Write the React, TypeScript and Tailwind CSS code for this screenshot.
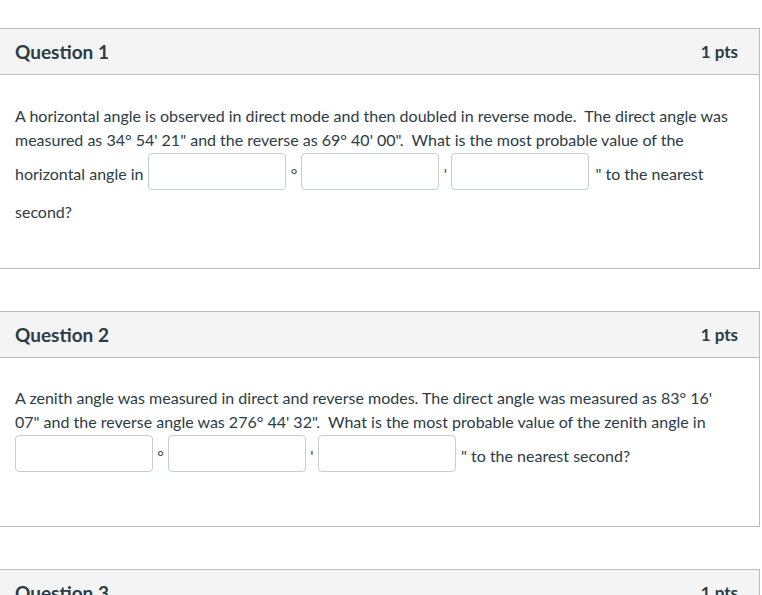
import React from "react";

function Header({ title }: { title: string }) {
  return (
    <div className="flex h-[46px] items-center justify-between border-b border-[#b9bcbf] bg-[#f4f4f4] pl-[15px] pr-[21px]">
      <span className="text-[19px] font-bold leading-none">{title}</span>
      <span className="text-[17px] font-bold leading-none">1 pts</span>
    </div>
  );
}

function Box() {
  return (
    <div className="mt-[1px] h-[37px] w-[138px] shrink-0 rounded-[4px] border border-[#c7cdd1] bg-white" />
  );
}

function Deg() {
  return <span className="mt-[10px] w-[15px] shrink-0 text-center leading-6 text-[#44484c]">°</span>;
}

function Min() {
  return <span className="mt-[10px] w-[12px] shrink-0 text-center leading-6 text-[#44484c]">'</span>;
}

export default function App() {
  return (
    <div className="min-h-screen bg-white pt-[28px] font-['Lato','Liberation_Sans',sans-serif] text-[16px] text-[#2d3b45]">
      {/* Question 1 */}
      <div className="w-[760px] border-y border-r border-[#b9bcbf]">
        <Header title="Question 1" />
        <div className="px-[15px] pb-[44px] pt-[29px]">
          <div className="whitespace-nowrap leading-6">
            A horizontal angle is observed in direct mode and then doubled in reverse mode.&nbsp; The direct angle was
          </div>
          <div className="whitespace-nowrap leading-6">
            measured as 34° 54' 21" and the reverse as 69° 40' 00".&nbsp; What is the most probable value of the
          </div>
          <div className="flex h-[48px] items-start whitespace-nowrap">
            <span className="mr-[5px] mt-[10px] leading-6">horizontal angle in</span>
            <Box />
            <Deg />
            <Box />
            <Min />
            <Box />
            <span className="ml-[6px] mt-[10px] leading-6">" to the nearest</span>
          </div>
          <div className="leading-6">second?</div>
        </div>
      </div>

      {/* Question 2 */}
      <div className="mt-[42px] w-[760px] border-y border-r border-[#b9bcbf]">
        <Header title="Question 2" />
        <div className="px-[15px] pb-[44px] pt-[28px]">
          <div className="whitespace-nowrap leading-6">
            A zenith angle was measured in direct and reverse modes. The direct angle was measured as 83° 16'
          </div>
          <div className="whitespace-nowrap leading-6">
            07" and the reverse angle was 276° 44' 32".&nbsp; What is the most probable value of the zenith angle in
          </div>
          <div className="flex h-[48px] items-start whitespace-nowrap">
            <Box />
            <Deg />
            <Box />
            <Min />
            <Box />
            <span className="ml-[5px] mt-[10px] leading-6">" to the nearest second?</span>
          </div>
        </div>
      </div>

      {/* Question 3 */}
      <div className="mt-[42px] w-[760px] border-y border-r border-[#b9bcbf]">
        <Header title="Question 3" />
        <div className="h-[120px]" />
      </div>
    </div>
  );
}
